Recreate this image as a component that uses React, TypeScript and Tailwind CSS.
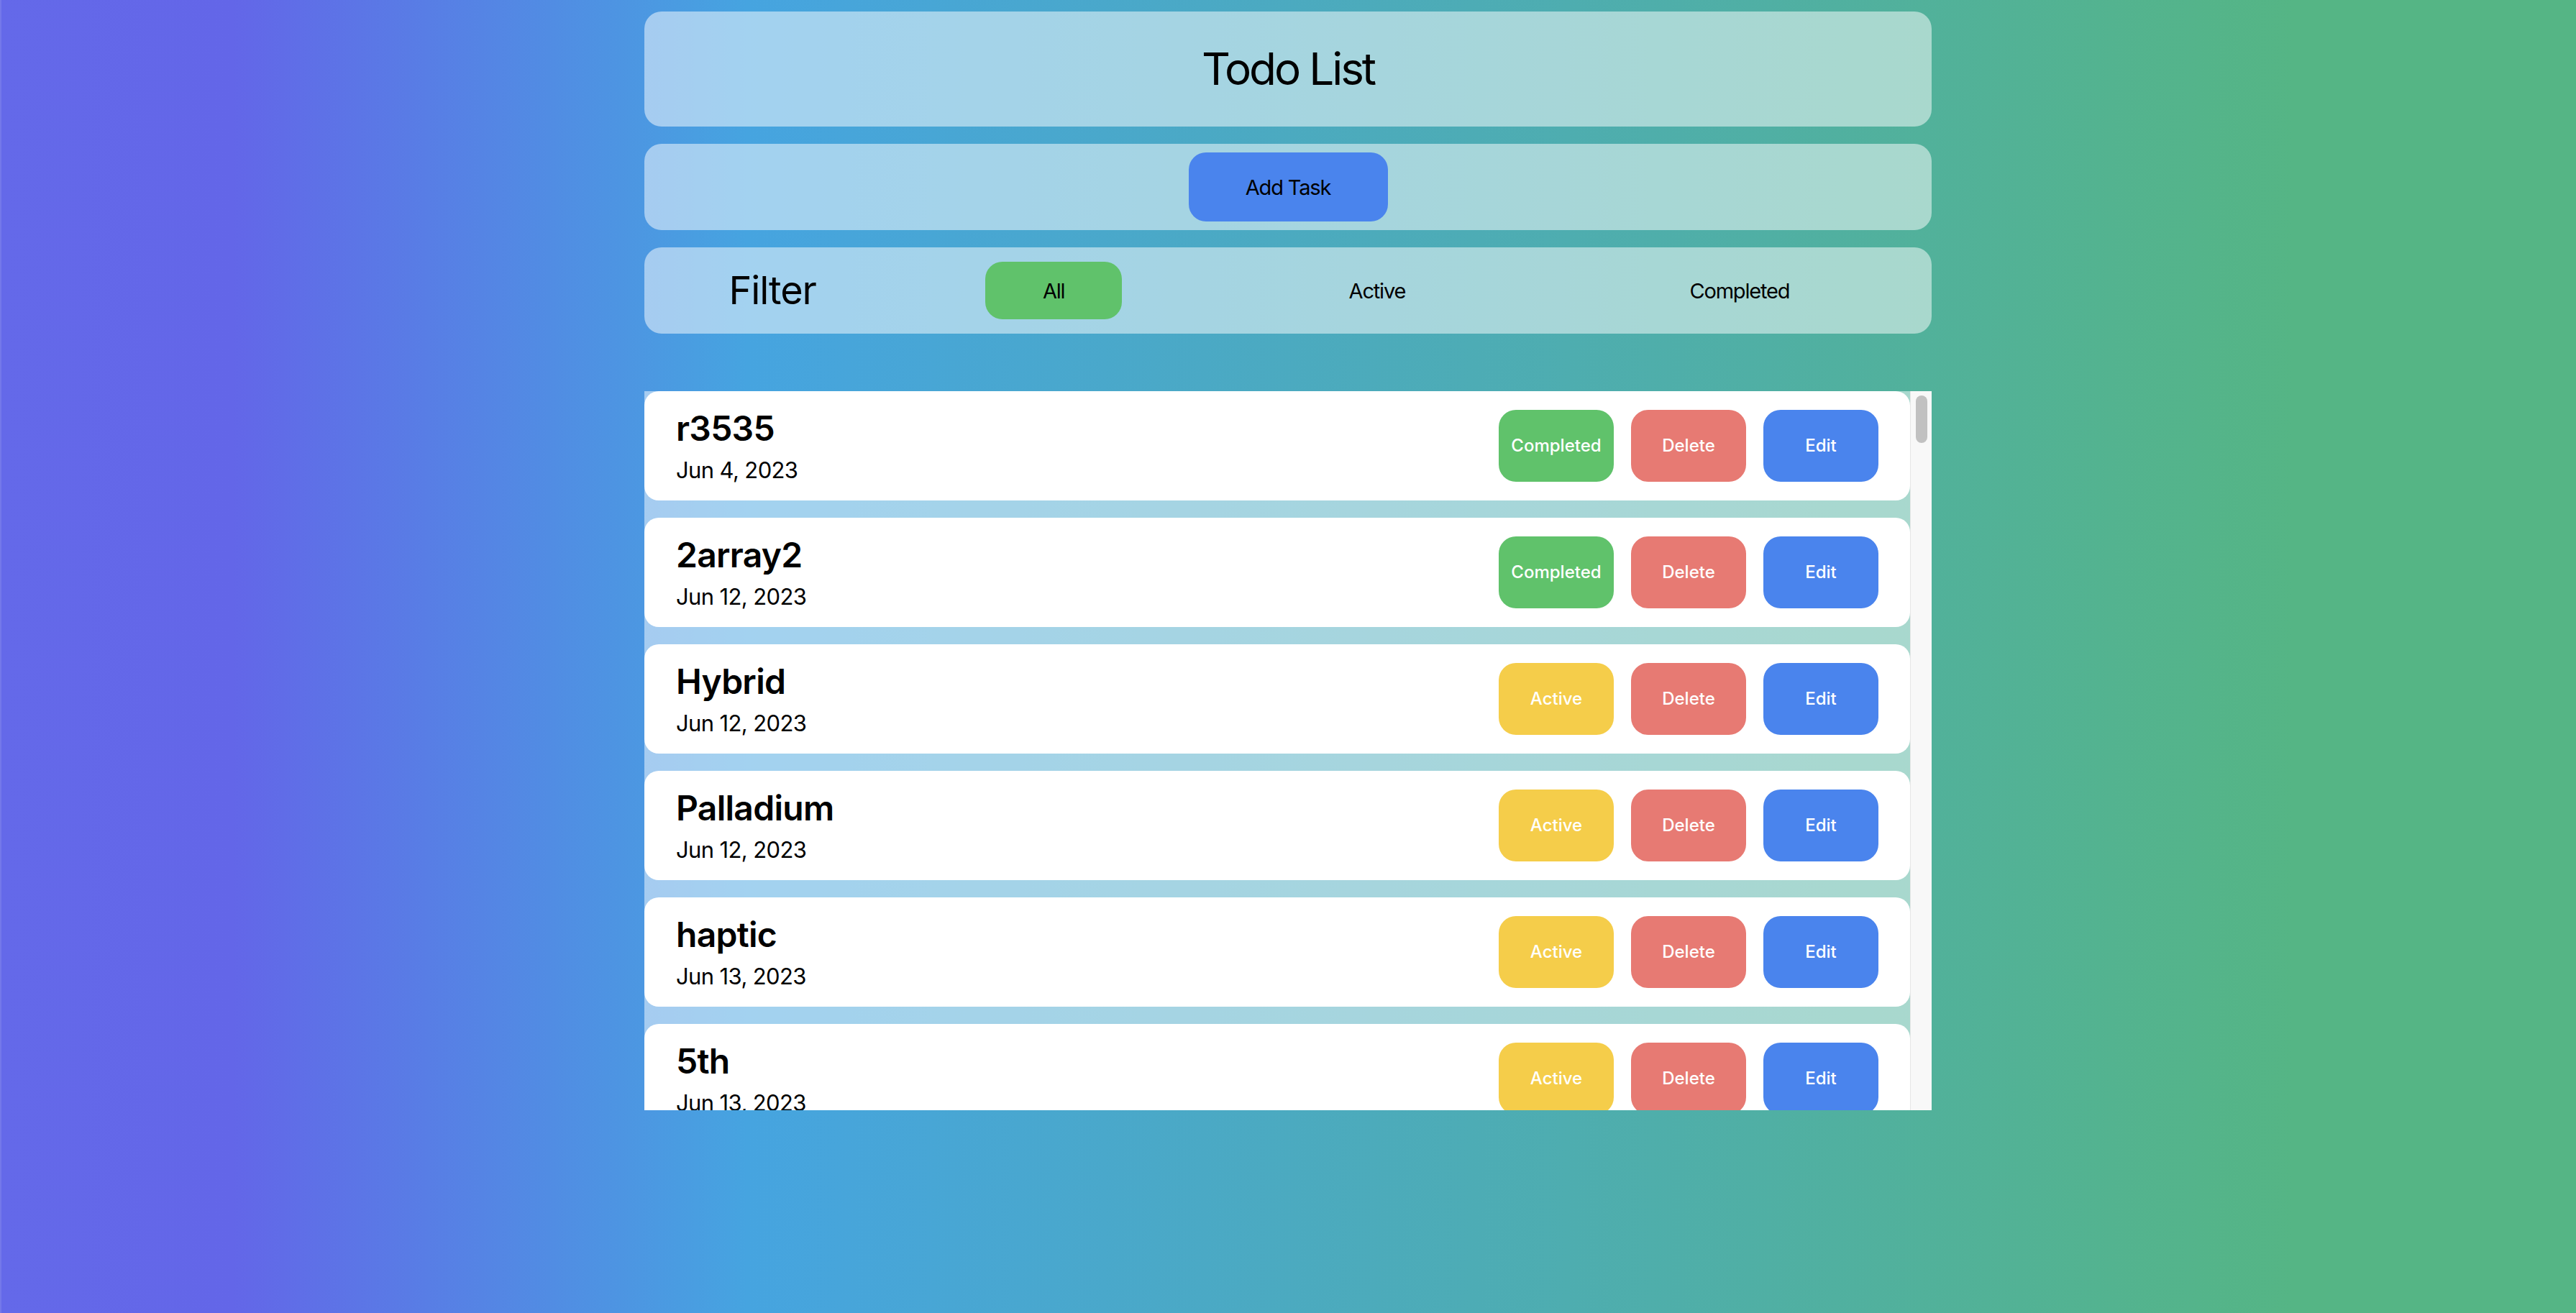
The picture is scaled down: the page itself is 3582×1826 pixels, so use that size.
import { useState } from "react";

interface Todo {
  id: number;
  title: string;
  date: string;
  completed: boolean;
}

const todos: Todo[] = [
  { id: 1, title: "r3535", date: "Jun 4, 2023", completed: true },
  { id: 2, title: "2array2", date: "Jun 12, 2023", completed: true },
  { id: 3, title: "Hybrid", date: "Jun 12, 2023", completed: false },
  { id: 4, title: "Palladium", date: "Jun 12, 2023", completed: false },
  { id: 5, title: "haptic", date: "Jun 13, 2023", completed: false },
  { id: 6, title: "5th", date: "Jun 13, 2023", completed: false },
];

const filters = ["All", "Active", "Completed"];

const TodoItem = ({ todo }: { todo: Todo }) => {
  return (
    <div className="shrink-0 h-[152px] bg-white rounded-[20px] flex items-center justify-between pl-[44px] pr-[44px]">
      <div className="flex flex-col gap-[10px]">
        <p className="text-[48px] leading-[58px] font-semibold tracking-[-0.015em]">
          {todo.title}
        </p>
        <p className="text-[31px] leading-[38px] tracking-[-0.02em]">{todo.date}</p>
      </div>
      <div className="flex gap-[24px] text-white text-[24px] font-medium">
        <button
          className={
            todo.completed
              ? "w-[160px] h-[100px] rounded-[24px] bg-[#60c26b]"
              : "w-[160px] h-[100px] rounded-[24px] bg-[#f5cd4a]"
          }
        >
          {todo.completed ? "Completed" : "Active"}
        </button>
        <button className="w-[160px] h-[100px] rounded-[24px] bg-[#e77a73]">
          Delete
        </button>
        <button className="w-[160px] h-[100px] rounded-[24px] bg-[#4a84ed]">
          Edit
        </button>
      </div>
    </div>
  );
};

const App = () => {
  const [filter, setFilter] = useState("All");

  return (
    <div className="min-h-screen w-full bg-[linear-gradient(90deg,#6469e9_0%,#6366e8_9%,#46a4e0_29%,#55b585_89%,#55b585_100%)] shadow-[inset_2px_0_0_#7478ea] font-['Inter',sans-serif] text-black">
      <div className="mx-auto w-[1790px] pt-[16px] flex flex-col">
        <header className="h-[160px] rounded-[24px] bg-white/50 flex items-center justify-center">
          <h1 className="text-[62px] leading-none tracking-[-0.05em]">Todo List</h1>
        </header>

        <div className="mt-[24px] h-[120px] rounded-[24px] bg-white/50 flex items-center justify-center">
          <button className="w-[277px] h-[96px] rounded-[24px] bg-[#4a84ed] text-[29px] leading-none tracking-[-0.04em]">
            Add Task
          </button>
        </div>

        <div className="mt-[24px] h-[120px] rounded-[24px] bg-white/50 flex items-center justify-around">
          <h2 className="text-[54px] leading-none tracking-[-0.02em]">Filter</h2>
          {filters.map((f) => (
            <button
              key={f}
              onClick={() => setFilter(f)}
              className={
                filter === f
                  ? "h-[80px] px-[80px] rounded-[24px] bg-[#60c26b] text-[29px] leading-none tracking-[-0.04em]"
                  : "h-[80px] px-[80px] rounded-[24px] text-[29px] leading-none tracking-[-0.04em]"
              }
            >
              {f}
            </button>
          ))}
        </div>

        <div className="mt-[80px] h-[1000px] flex">
          <div className="flex-1 overflow-hidden bg-white/50 flex flex-col gap-[24px]">
            {todos.map((todo) => (
              <TodoItem key={todo.id} todo={todo} />
            ))}
          </div>
          {/* scrollbar track */}
          <div className="w-[30px] bg-[#f8f8f8] border-l border-[#e6e6e6] pt-[6px] flex justify-center">
            <div className="w-[16px] h-[66px] rounded-full bg-[#c1c1c1]" />
          </div>
        </div>
      </div>
    </div>
  );
};

export default App;
